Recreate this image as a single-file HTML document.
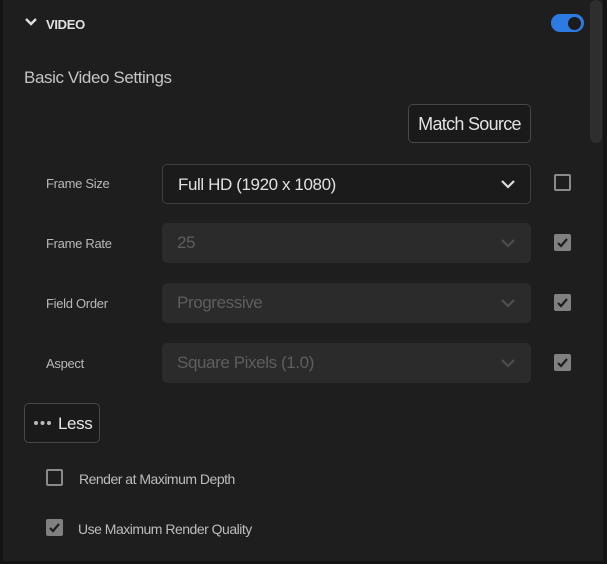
<!DOCTYPE html>
<html><head><style>
body{margin:0;width:607px;height:564px;background:#1e1e1e;overflow:hidden;font-family:"Liberation Sans",sans-serif;position:relative}
.a{position:absolute}
.lbl{position:absolute;left:46px;font-size:13px;color:#b8b8b8;letter-spacing:-0.3px}
.sel{position:absolute;left:162px;width:369px;height:40px;border-radius:5px;box-sizing:border-box;font-size:17px;line-height:40px;padding-left:15px;letter-spacing:-0.4px}
.dis{background:#2b2b2b;color:#5e5e5e}
.cb{position:absolute;width:17px;height:17px;box-sizing:border-box;border-radius:2px}
.on{background:#808080}
.off{border:2px solid #8a8a8a}
</style></head><body>
<div class="a" style="left:0;top:0;width:3px;height:564px;background:#141414"></div>
<div class="a" style="left:603px;top:0;width:4px;height:564px;background:#141414"></div>
<div class="a" style="left:0;top:561px;width:607px;height:3px;background:#141414"></div>
<div class="a" style="left:590px;top:0;width:12px;height:143px;background:#2e2e2e;border-radius:6px"></div>
<svg class="a" style="left:24px;top:17px" width="14" height="10"><path d="M2 2 L7 7 L12 2" stroke="#ddd" stroke-width="2.4" fill="none"/></svg>
<div class="a" style="left:46px;top:17px;font-size:13px;font-weight:bold;color:#e0e0e0;letter-spacing:-0.3px">VIDEO</div>
<div class="a" style="left:551px;top:14px;width:33px;height:18px;border-radius:9px;background:#2d7be2"></div>
<div class="a" style="left:566px;top:15px;width:13px;height:13px;border-radius:50%;background:#1b1b1b;border:2px solid #2d7be2"></div>
<div class="a" style="left:24px;top:68px;font-size:17px;color:#c4c4c4;letter-spacing:-0.4px">Basic Video Settings</div>
<div class="a" style="left:408px;top:104px;width:123px;height:39px;box-sizing:border-box;border:1px solid #474747;border-radius:5px;background:#1a1a1a;color:#e2e2e2;font-size:18px;line-height:39px;text-align:center;letter-spacing:-0.7px">Match Source</div>
<div class="lbl" style="top:176px">Frame Size</div>
<div class="sel" style="top:164px;border:1px solid #3e3e3e;background:#1b1b1b;color:#e0e0e0">Full HD (1920 x 1080)</div>
<svg class="a" style="left:500px;top:178px" width="16" height="12"><path d="M2 3 L8 9 L14 3" stroke="#ddd" stroke-width="2.2" fill="none"/></svg>
<div class="cb off" style="left:554px;top:174px"></div>
<div class="lbl" style="top:236px">Frame Rate</div>
<div class="sel dis" style="top:223px">25</div>
<div class="lbl" style="top:296px">Field Order</div>
<div class="sel dis" style="top:283px">Progressive</div>
<div class="lbl" style="top:356px">Aspect</div>
<div class="sel dis" style="top:343px">Square Pixels (1.0)</div>
<svg class="a" style="left:500px;top:237px" width="16" height="150"><path d="M2 3 L8 9 L14 3 M2 63 L8 69 L14 63 M2 123 L8 129 L14 123" stroke="#4e4e4e" stroke-width="2.2" fill="none"/></svg>
<div class="cb on" style="left:554px;top:234px"></div>
<div class="cb on" style="left:554px;top:294px"></div>
<div class="cb on" style="left:554px;top:354px"></div>
<svg class="a" style="left:554px;top:234px" width="17" height="137"><path d="M4 9 L7 12 L13 5 M4 69 L7 72 L13 65 M4 129 L7 132 L13 125" stroke="#1e1e1e" stroke-width="2.2" fill="none"/></svg>
<div class="a" style="left:24px;top:403px;width:76px;height:40px;box-sizing:border-box;border:1px solid #474747;border-radius:5px;background:#1a1a1a"></div>
<svg class="a" style="left:33px;top:420px" width="20" height="6"><circle cx="3" cy="3" r="2" fill="#bbb"/><circle cx="9.5" cy="3" r="2" fill="#bbb"/><circle cx="16" cy="3" r="2" fill="#bbb"/></svg>
<div class="a" style="left:58px;top:414px;font-size:17px;color:#e6e6e6;letter-spacing:-0.4px">Less</div>
<div class="cb off" style="left:46px;top:469px"></div>
<div class="a" style="left:79px;top:471px;font-size:14px;color:#bcbcbc;letter-spacing:-0.5px">Render at Maximum Depth</div>
<div class="cb on" style="left:46px;top:519px"></div>
<svg class="a" style="left:46px;top:519px" width="17" height="17"><path d="M4 9 L7 12 L13 5" stroke="#1e1e1e" stroke-width="2.2" fill="none"/></svg>
<div class="a" style="left:78px;top:521px;font-size:14px;color:#bcbcbc;letter-spacing:-0.5px">Use Maximum Render Quality</div>
</body></html>
